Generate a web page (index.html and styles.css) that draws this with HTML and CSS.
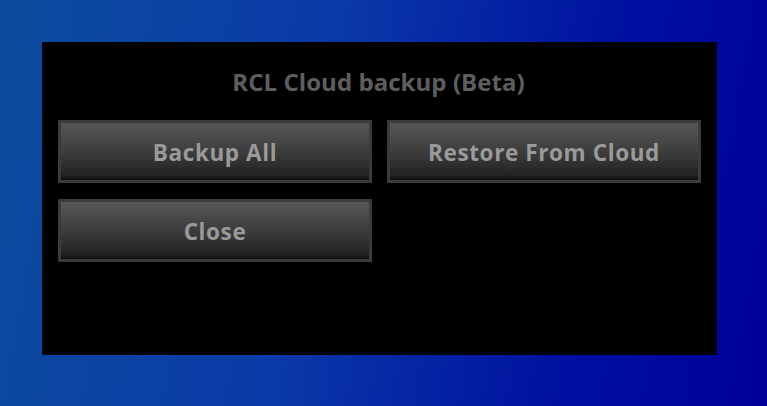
FILE: index.html
```html
<!DOCTYPE html>
<html>
<head>
<meta charset="utf-8">
<link rel="stylesheet" href="styles.css">
</head>
<body>
<div class="screen">
  <div class="dialog">
    <div class="title">RCL Cloud backup (Beta)</div>
    <div class="grid">
      <button class="btn">Backup All</button>
      <button class="btn">Restore From Cloud</button>
      <button class="btn">Close</button>
    </div>
  </div>
</div>
</body>
</html>
```
FILE: styles.css
```css
html, body {
  margin: 0;
  padding: 0;
  width: 767px;
  height: 406px;
  overflow: hidden;
}
.screen {
  width: 767px;
  height: 406px;
  box-sizing: border-box;
  padding: 42px 50px 51px 42px;
  background: linear-gradient(100deg, #0c4c9e 0%, #0a3aa8 40%, #0010a0 75%, #00009a 100%);
}
.dialog {
  background: #000;
  height: 313px;
  box-sizing: border-box;
  padding: 22px 16px 0 16px;
  display: flex;
  flex-direction: column;
}
.title {
  font-family: "Open Sans", sans-serif;
  font-weight: 700;
  font-size: 24px;
  color: #5e5e5e;
  text-align: center;
  line-height: 36px;
  letter-spacing: 0.05px;
  margin-left: -2px;
}
.grid {
  margin-top: 20px;
  display: grid;
  grid-template-columns: 314px 314px;
  column-gap: 15px;
  row-gap: 16px;
}
.btn {
  height: 63px;
  margin: 0;
  padding: 0;
  border: 3px solid #3b3b3b;
  background: linear-gradient(to bottom, #575757 0%, #3a3a3a 55%, #222 92%, #0e0e0e 100%);
  color: #9a9a9a;
  font-family: "Open Sans", sans-serif;
  font-weight: 700;
  font-size: 22.5px;
  letter-spacing: 0.6px;
  box-sizing: border-box;
  padding-top: 2px;
}
```
